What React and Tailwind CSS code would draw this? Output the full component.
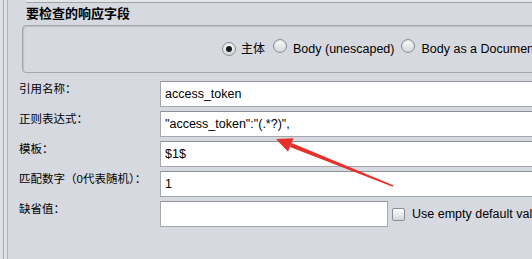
const fontStack = { fontFamily: "'Liberation Sans', 'Noto Sans CJK SC', sans-serif" };

function Radio({ checked }) {
  return (
    <span className="relative inline-flex h-[14px] w-[14px] shrink-0 items-center justify-center rounded-full border border-[#8a8d92] bg-gradient-to-b from-white to-[#d3d5d9] shadow-[inset_0_1px_1px_rgba(0,0,0,0.15)]">
      {checked && <span className="h-[6px] w-[6px] rounded-full bg-[#1a1a1a]" />}
    </span>
  );
}

function Field({ value, className }) {
  return (
    <div
      className={
        "flex h-[26px] shrink-0 items-center border border-[#a4a7ac] border-t-[#8e9196] bg-white pl-[4px] text-[12.5px] text-black whitespace-nowrap " +
        className
      }
    >
      {value}
    </div>
  );
}

const rows = [
  { label: "引用名称：", value: "access_token" },
  { label: "正则表达式：", value: '"access_token":"(.*?)",' },
  { label: "模板：", value: "$1$" },
  { label: "匹配数字（0代表随机）：", value: "1" },
];

export default function App() {
  return (
    <div
      className="relative flex h-[259px] w-[532px] overflow-hidden bg-[#d6d9df] text-black"
      style={fontStack}
    >
      {/* splitter strip on the left */}
      <div className="flex h-full w-[8px] shrink-0">
        <div className="w-[3px] bg-[#dcdfe4]" />
        <div className="w-px bg-[#a9adb4]" />
        <div className="w-[3px] bg-[#dde0e5]" />
        <div className="w-px bg-[#b0b4ba]" />
      </div>

      <div className="flex min-w-0 flex-1 flex-col">
        <div className="ml-[18px] h-[3px] shrink-0 border-b border-[#9ea2a9] bg-[#e4e6ea]" />

        <div className="ml-[18px] mt-[3px] h-[16px] shrink-0 text-[13px] font-bold leading-[16px]">
          要检查的响应字段
        </div>

        <div className="ml-[14px] mt-[3px] flex h-[48px] w-[540px] shrink-0 items-center rounded-[4px] border border-[#a3a7ae] pl-[199px] text-[12.5px] shadow-[inset_1px_1px_1px_rgba(0,0,0,0.12)]">
          <Radio checked />
          <span className="ml-[5px] text-[12px]">主体</span>
          <span className="ml-[8px]">
            <Radio />
          </span>
          <span className="ml-[6px] whitespace-nowrap">Body (unescaped)</span>
          <span className="ml-[7px]">
            <Radio />
          </span>
          <span className="ml-[6px] whitespace-nowrap">Body as a Document</span>
        </div>

        <div className="mt-[8px] flex flex-col gap-[4px] pl-[11px]">
          {rows.map((r) => (
            <div key={r.label} className="flex h-[26px]">
              <div className="w-[141px] shrink-0 whitespace-nowrap pt-px text-[11.5px] leading-[14px]">
                {r.label}
              </div>
              <Field value={r.value} className="w-[380px]" />
            </div>
          ))}
          <div className="flex h-[26px] items-center">
            <div className="w-[141px] shrink-0 self-start pt-px text-[11.5px] leading-[14px]">缺省值：</div>
            <Field value="" className="w-[228px]" />
            <span className="ml-[4px] h-[13px] w-[13px] shrink-0 rounded-[2px] border border-[#8a8d92] bg-gradient-to-b from-white to-[#d3d5d9]" />
            <span className="ml-[7px] whitespace-nowrap text-[12.5px]">Use empty default value</span>
          </div>
        </div>
      </div>

      {/* red annotation arrow */}
      <svg
        className="pointer-events-none absolute left-0 top-0"
        width="532"
        height="259"
        viewBox="0 0 532 259"
      >
        <polygon
          points="291.6,142.9 393.3,185.3 392.7,186.7 290.0,147.1"
          fill="#e8302a"
        />
        <polygon points="276,139 293.6,138.3 288.0,151.7" fill="#e8302a" />
      </svg>
    </div>
  );
}
